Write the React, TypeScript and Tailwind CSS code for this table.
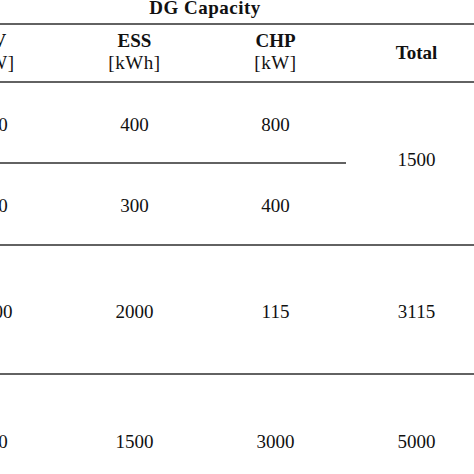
import React from "react";

const line = "border-b-2 border-[#626262]";

function Cell({ children, className = "" }: { children: React.ReactNode; className?: string }) {
  return <div className={`flex items-center justify-center text-center ${className}`}>{children}</div>;
}

export default function App() {
  const rows1 = [
    ["300", "400", "800"],
    ["800", "300", "400"],
  ];
  return (
    <div className="w-[474px] h-[474px] overflow-hidden bg-white text-[#111111] font-['Liberation_Serif',serif] text-[19px]">
      <div className="ml-[-77px] w-[564px] grid grid-cols-[141px_141px_141px_141px]">
        {/* title row */}
        <div className={`col-span-4 h-[25px] ${line} flex justify-center items-end pb-[6px] leading-[19px] font-bold tracking-[0.5px]`}>
          DG Capacity
        </div>
        {/* header row */}
        {[
          ["PV", "[kW]"],
          ["ESS", "[kWh]"],
          ["CHP", "[kW]"],
        ].map(([a, b]) => (
          <Cell key={a} className={`h-[58px] ${line} pb-[3px]`}>
            <div className="flex flex-col leading-[22px]">
              <span className="font-bold">{a}</span>
              <span className="tracking-[0.6px]">{b}</span>
            </div>
          </Cell>
        ))}
        <Cell className={`h-[58px] ${line} font-bold leading-[22px]`}>Total</Cell>

        {/* row 1a */}
        {rows1[0].map((v, i) => (
          <Cell key={"a" + i} className={`h-[81px] ${line} pt-[5px] leading-[22px]`}>
            {v}
          </Cell>
        ))}
        <Cell className={`row-span-2 ${line} pb-[7px] leading-[22px]`}>1500</Cell>
        {/* row 1b */}
        {rows1[1].map((v, i) => (
          <Cell key={"b" + i} className={`h-[82px] ${line} pt-[4px] leading-[22px]`}>
            {v}
          </Cell>
        ))}

        {/* row 2 */}
        {["1000", "2000", "115", "3115"].map((v, i) => (
          <Cell key={"c" + i} className={`h-[129px] ${line} pt-[4px] leading-[22px]`}>
            {v}
          </Cell>
        ))}

        {/* row 3 */}
        {["500", "1500", "3000", "5000"].map((v, i) => (
          <Cell key={"d" + i} className="h-[129px] pt-[4px] leading-[22px]">
            {v}
          </Cell>
        ))}
      </div>
    </div>
  );
}
